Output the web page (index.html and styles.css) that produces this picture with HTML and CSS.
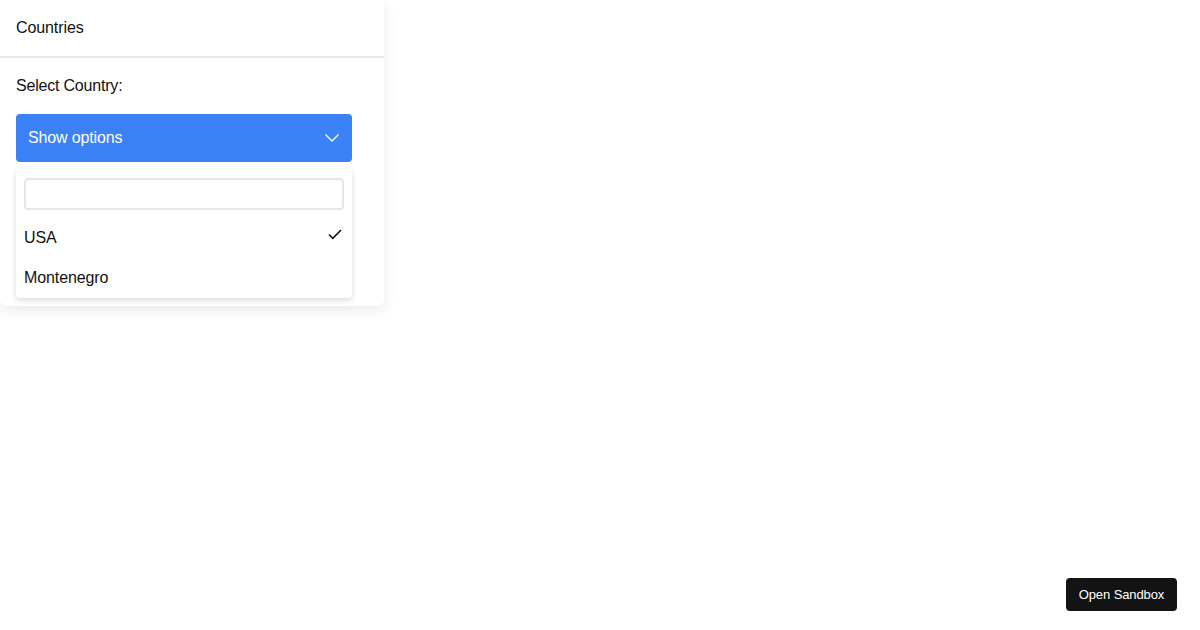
FILE: index.html
```html
<!DOCTYPE html>
<html>
<head>
<meta charset="utf-8">
<link rel="stylesheet" href="styles.css">
</head>
<body>
<div class="card">
  <div class="card-header">Countries</div>
  <div class="card-body">
    <div class="label">Select Country:</div>
    <button class="select-btn">
      <span>Show options</span>
      <svg width="16" height="16" viewBox="0 0 16 16"><path d="M1.5 4.5 L8 11 L14.5 4.5" fill="none" stroke="#fff" stroke-width="1.3"/></svg>
    </button>
    <div class="dropdown">
      <input class="search" type="text">
      <div class="option"><span>USA</span><svg class="check" width="14" height="11" viewBox="0 0 14 11"><path d="M1 5.5 L4.8 9.3 L13 1" fill="none" stroke="#111" stroke-width="1.6"/></svg></div>
      <div class="option"><span>Montenegro</span></div>
    </div>
  </div>
</div>
<button class="sandbox">Open Sandbox</button>
</body>
</html>
```
FILE: styles.css
```css
* { box-sizing: border-box; }
body {
  margin: 0;
  font-family: "Liberation Sans", Arial, sans-serif;
  color: #111;
  background: #fff;
  width: 1200px;
  height: 630px;
  overflow: hidden;
}
.card {
  width: 384px;
  background: #fff;
  border-radius: 0 0 6px 6px;
  box-shadow: 0 4px 14px rgba(0,0,0,0.09);
}
.card-header {
  height: 58px;
  padding: 16px;
  font-size: 16px;
  line-height: 24px;
  letter-spacing: -0.1px;
  border-bottom: 2px solid #e5e7eb;
}
.card-body {
  padding: 16px 16px 8px;
}
.label {
  font-size: 16px;
  line-height: 24px;
  letter-spacing: -0.2px;
  margin-bottom: 16px;
}
.select-btn {
  width: 336px;
  height: 48px;
  background: #3b82f6;
  border: none;
  border-radius: 4px;
  color: #fff;
  font-family: inherit;
  font-size: 16px;
  letter-spacing: -0.15px;
  padding: 0 12px;
  display: flex;
  align-items: center;
  justify-content: space-between;
}
.dropdown {
  margin-top: 8px;
  width: 336px;
  background: #fff;
  border-radius: 4px;
  box-shadow: 0 2px 6px rgba(0,0,0,0.15);
  padding: 8px 8px 0;
}
.search {
  display: block;
  width: 320px;
  height: 32px;
  border: 2px solid #e5e7eb;
  border-radius: 4px;
  margin: 0 0 8px;
  font-family: inherit;
  outline: none;
}
.option {
  height: 40px;
  display: flex;
  align-items: center;
  justify-content: space-between;
  font-size: 16px;
  letter-spacing: -0.1px;
  padding-right: 2px;
}
.check { margin-top: -7px; }
.sandbox {
  position: fixed;
  right: 23px;
  bottom: 19px;
  width: 111px;
  height: 33px;
  background: #131313;
  color: #fff;
  border: none;
  border-radius: 4px;
  font-family: inherit;
  font-size: 13px;
  letter-spacing: -0.1px;
}
```
